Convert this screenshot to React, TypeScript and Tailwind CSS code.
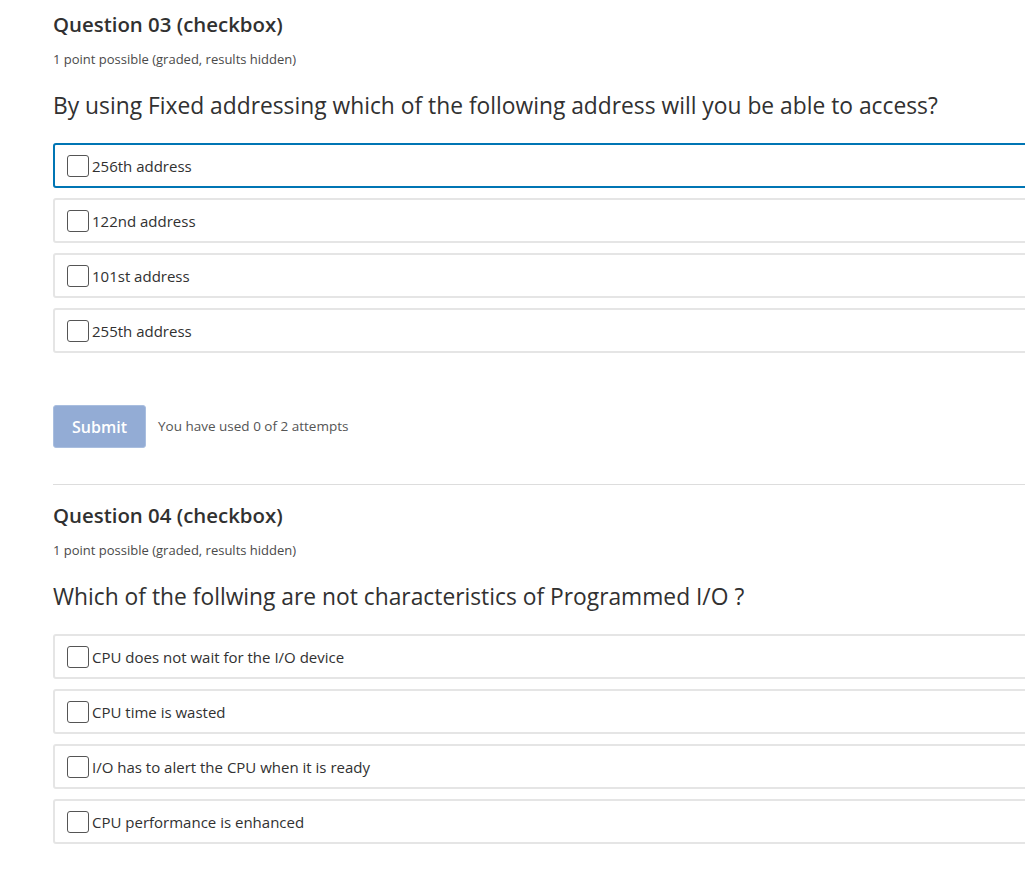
import React from "react";

type Question = {
  title: string;
  prompt: string;
  choices: string[];
  focused?: number;
};

const QUESTIONS: Question[] = [
  {
    title: "Question 03 (checkbox)",
    prompt: "By using Fixed addressing which of the following address will you be able to access?",
    choices: ["256th address", "122nd address", "101st address", "255th address"],
    focused: 0,
  },
  {
    title: "Question 04 (checkbox)",
    prompt: "Which of the follwing are not characteristics of Programmed I/O ?",
    choices: [
      "CPU does not wait for the I/O device",
      "CPU time is wasted",
      "I/O has to alert the CPU when it is ready",
      "CPU performance is enhanced",
    ],
  },
];

function Choice({ label, focused }: { label: string; focused?: boolean }) {
  return (
    <label
      className={`flex h-[45px] w-[1000px] items-center rounded-[3px] border-2 pl-3 ${
        focused ? "border-[#0075b4]" : "border-[#e5e5e5]"
      }`}
    >
      <span className="block h-[22px] w-[22px] shrink-0 rounded-[3px] border border-[#555] bg-white" />
      <span className="ml-[3px] text-[15px] leading-5 text-[#313131]">{label}</span>
    </label>
  );
}

function Problem({ q }: { q: Question }) {
  return (
    <div>
      <h3 className="text-[20.4px] leading-[28px] font-semibold text-[#313131]">{q.title}</h3>
      <div className="mt-[13px] text-[13px] leading-4 text-[#4a4a4a]">1 point possible (graded, results hidden)</div>
      <p className="mt-[23px] text-[22.8px] leading-8 text-[#313131]">{q.prompt}</p>
      <div className="mt-[21px] flex flex-col gap-[10px]">
        {q.choices.map((c, i) => (
          <Choice key={c} label={c} focused={q.focused === i} />
        ))}
      </div>
    </div>
  );
}

export default function App() {
  return (
    <div
      className="h-[873px] overflow-hidden bg-white pl-[53px] pt-[10px]"
      style={{ fontFamily: '"Open Sans", "Noto Sans", sans-serif' }}
    >
      <Problem q={QUESTIONS[0]} />
      <div className="mt-[52px] flex items-center gap-3">
        <button className="h-[43px] w-[93px] rounded-[3px] border border-[#a9bedf] bg-[#93acd5] text-[16px] font-semibold text-white">
          Submit
        </button>
        <span className="text-[13.5px] text-[#555]">You have used 0 of 2 attempts</span>
      </div>
      <div className="mt-[36px] h-px w-[1000px] bg-[#dddddd]" />
      <div className="mt-[16px]">
        <Problem q={QUESTIONS[1]} />
      </div>
    </div>
  );
}
